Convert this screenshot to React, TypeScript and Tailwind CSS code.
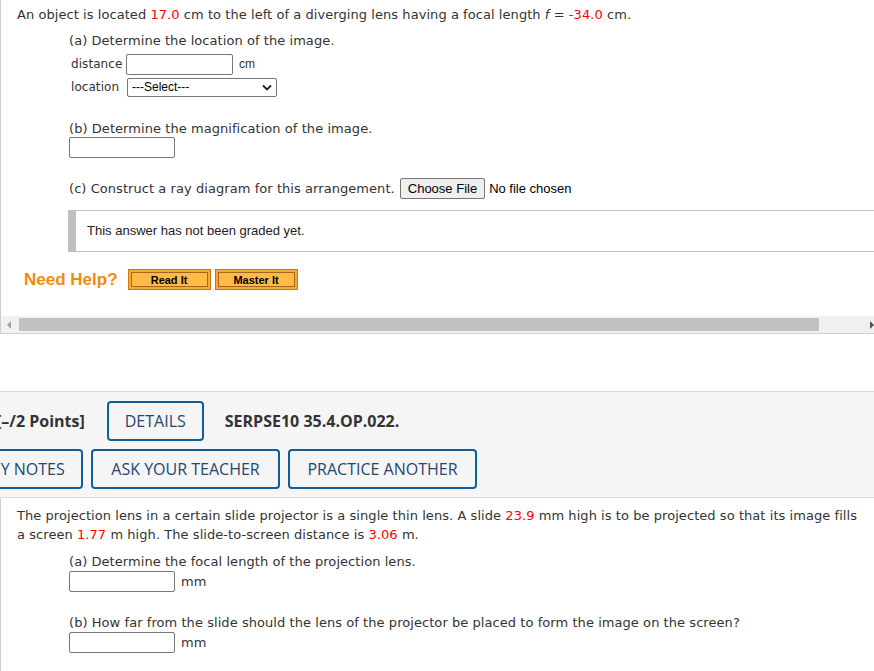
import React from "react";

const V = { fontFamily: '"DejaVu Sans", Verdana, sans-serif', letterSpacing: "0.06px" };
const A = { fontFamily: '"Liberation Sans", Arial, sans-serif', letterSpacing: "0px" };
const O = { fontFamily: '"Open Sans", "Liberation Sans", sans-serif', letterSpacing: "0px" };

function Red({ children }: { children: React.ReactNode }) {
  return <span className="text-[#ff0000]">{children}</span>;
}

function Input({ w = 106 }: { w?: number }) {
  return (
    <div
      className="h-[21px] border border-[#767676] rounded-[2px] bg-white shrink-0"
      style={{ width: w }}
    />
  );
}

function HelpBtn({ label, w }: { label: string; w: number }) {
  return (
    <div
      className="h-[21px] border border-[#c47a1c] bg-[#f9a838] p-[2px] box-border"
      style={{ width: w }}
    >
      <div
        className="h-full border border-[#a8661a] bg-[#ffbb45] flex items-center justify-center text-[11px] font-bold text-black"
        style={A}
      >
        {label}
      </div>
    </div>
  );
}

function BlueBtn({ children, className = "" }: { children: React.ReactNode; className?: string }) {
  return (
    <div
      className={`h-[40px] border-2 border-[#0f5f9a] rounded-[4px] flex items-center justify-center text-[16px] text-[#27466f] whitespace-nowrap shrink-0 ${className}`}
      style={O}
    >
      {children}
    </div>
  );
}

export default function App() {
  return (
    <div className="w-[874px] overflow-hidden bg-white text-[#333]" style={V}>
      {/* Top question */}
      <div className="border-l border-b border-[#cfcfcf]">
        <div className="pt-[6px] text-[13px] leading-[18px]">
          <div className="pl-[16px] whitespace-nowrap">
            An object is located <Red>17.0</Red> cm to the left of a diverging lens having a focal length <i>f</i> ={" "}
            <Red>-34.0</Red> cm.
          </div>
          <div className="pl-[68px] mt-[8px]">(a) Determine the location of the image.</div>
          <div className="pl-[70px] mt-[3px] flex items-center h-[22px] text-[12px]">
            <span className="w-[55px]">distance</span>
            <Input w={107} />
            <span className="ml-[6px]" style={A}>cm</span>
          </div>
          <div className="pl-[70px] mt-[2px] flex items-center h-[20px] text-[12px]">
            <span className="w-[56px]">location</span>
            <div
              className="w-[150px] h-[19px] border border-[#767676] rounded-[2px] flex items-center justify-between pl-[4px] pr-[4px] text-[12px] text-black"
              style={A}
            >
              <span>---Select---</span>
              <svg width="10" height="7" viewBox="0 0 10 7">
                <path d="M1 1.5 L5 5.5 L9 1.5" fill="none" stroke="#222" strokeWidth="1.8" />
              </svg>
            </div>
          </div>
          <div className="pl-[68px] mt-[23px]">(b) Determine the magnification of the image.</div>
          <div className="pl-[68px] mt-[-1px]">
            <Input w={106} />
          </div>
          <div className="pl-[68px] mt-[20px] flex items-center h-[21px]">
            <span>(c) Construct a ray diagram for this arrangement.</span>
            <div
              className="ml-[5px] h-[21px] px-[7px] border border-[#767676] rounded-[2px] bg-[#efefef] flex items-center text-[13px] text-black"
              style={A}
            >
              Choose File
            </div>
            <span className="ml-[4px] text-[13px] text-black" style={A}>No file chosen</span>
          </div>
          <div className="ml-[67px] mt-[11px] h-[42px] flex border-y border-[#c0c0c0]">
            <div className="w-[8px] bg-[#c0c0c0]" />
            <div className="flex items-center pl-[11px] text-[13px] text-[#222]" style={A}>
              This answer has not been graded yet.
            </div>
          </div>
          <div className="pl-[23px] mt-[17px] flex items-center h-[21px]">
            <span className="text-[17px] font-bold text-[#f28a0c] mr-[10px]" style={A}>
              Need Help?
            </span>
            <HelpBtn label="Read It" w={83} />
            <div className="w-[4px]" />
            <HelpBtn label="Master It" w={83} />
          </div>
        </div>
        {/* scrollbar */}
        <div className="mt-[26px] h-[17px] bg-[#f1f1f1] flex items-center relative">
          <svg className="ml-[6px]" width="6" height="8" viewBox="0 0 6 8">
            <path d="M4 0 L0 4 L4 8 Z" fill="#a3a3a3" />
          </svg>
          <div className="ml-[6px] w-[800px] h-[13px] bg-[#c1c1c1]" />
          <svg className="absolute right-0" width="4" height="8" viewBox="0 0 4 8">
            <path d="M0 0 L4 4 L0 8 Z" fill="#505050" />
          </svg>
        </div>
      </div>

      {/* Second question header */}
      <div className="mt-[57px] border-t border-b border-[#dcdcdc] bg-[#f5f5f5] pt-[9px] pb-[8px]">
        <div className="flex items-center h-[40px]">
          <span className="ml-[-4px] text-[16px] font-bold text-[#333] whitespace-nowrap" style={O}>
            [–/2 Points]
          </span>
          <BlueBtn className="ml-[22px] w-[97px]">DETAILS</BlueBtn>
          <span className="ml-[21px] text-[16px] font-bold text-[#333] whitespace-nowrap" style={O}>
            SERPSE10 35.4.OP.022.
          </span>
        </div>
        <div className="flex items-center mt-[8px]">
          <BlueBtn className="ml-[-32px] w-[115px]">MY NOTES</BlueBtn>
          <BlueBtn className="ml-[8px] w-[189px]">ASK YOUR TEACHER</BlueBtn>
          <BlueBtn className="ml-[8px] w-[189px]">PRACTICE ANOTHER</BlueBtn>
        </div>
      </div>

      <div className="border-l border-[#cfcfcf] text-[13px] leading-[19px] pb-[20px]">
        <div className="pl-[16px] pt-[8px] pr-[14px]">
          The projection lens in a certain slide projector is a single thin lens. A slide <Red>23.9</Red> mm high is to be
          projected so that its image fills a screen <Red>1.77</Red> m high. The slide-to-screen distance is{" "}
          <Red>3.06</Red> m.
        </div>
        <div className="pl-[68px] mt-[8px]">(a) Determine the focal length of the projection lens.</div>
        <div className="pl-[68px] flex items-center">
          <Input w={106} />
          <span className="ml-[6px]">mm</span>
        </div>
        <div className="pl-[68px] mt-[21px]">
          (b) How far from the slide should the lens of the projector be placed to form the image on the screen?
        </div>
        <div className="pl-[68px] flex items-center">
          <Input w={106} />
          <span className="ml-[6px]">mm</span>
        </div>
      </div>
    </div>
  );
}
